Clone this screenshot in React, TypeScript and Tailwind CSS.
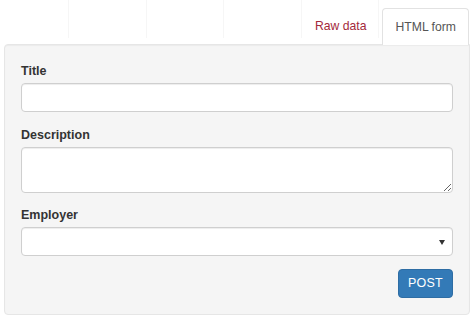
import React from "react";

export default function App() {
  return (
    <div className="w-[474px] h-[320px] bg-white overflow-hidden text-[12px] text-[#333] font-['Liberation_Sans',Arial,sans-serif]">
      {/* top bar with tabs */}
      <div className="relative h-[44px]">
        <div className="absolute inset-x-0 top-0 h-[38px] flex pl-[68px]">
          <div className="w-[78px] border-l border-[#f6f6f6]" />
          <div className="w-[77px] border-l border-[#f6f6f6]" />
          <div className="w-[78px] border-l border-[#f6f6f6]" />
          <div className="w-[77px] border-l border-[#f6f6f6]" />
          <div className="w-[78px] border-l border-[#f6f6f6]" />
        </div>
        <div className="relative flex justify-end items-end h-full pr-[5px]">
          <div className="h-[36px] pl-[12px] pr-[14px] mr-[1px] flex items-center text-[12.2px] text-[#a3293b]">Raw data</div>
          <div className="h-[37px] pl-[13px] pr-[12px] flex items-center bg-white border border-b-0 border-[#e2e2e2] rounded-t-[4px] text-[12.2px] text-[#555] -mb-[1px] relative z-10">
            HTML form
          </div>
        </div>
      </div>
      {/* panel */}
      <div className="mx-[4px] w-[466px] h-[271px] bg-[#f5f5f5] border border-[#e6e6e6] rounded-b-[4px] rounded-tl-[4px] shadow-[inset_0_1px_1px_rgba(0,0,0,0.04)] px-[16px] pt-[18px] pb-[16px] flex flex-col">
        <label className="font-bold leading-[17px] text-[12.5px]">Title</label>
        <input className="mt-[3px] h-[29px] bg-white border border-[#cfcfcf] rounded-[4px] shadow-[inset_0_1px_1px_rgba(0,0,0,0.075)] outline-none px-[10px]" />
        <label className="mt-[15px] font-bold leading-[17px] text-[12.5px]">Description</label>
        <textarea className="mt-[3px] h-[46px] bg-white border border-[#cfcfcf] rounded-[4px] shadow-[inset_0_1px_1px_rgba(0,0,0,0.075)] outline-none px-[10px] resize-y" />
        <label className="mt-[14px] font-bold leading-[17px] text-[12.5px]">Employer</label>
        <div className="relative mt-[3px]">
          <select className="w-full h-[29px] appearance-none bg-white border border-[#cfcfcf] rounded-[4px] shadow-[inset_0_1px_1px_rgba(0,0,0,0.075)] outline-none px-[10px]">
            <option></option>
          </select>
          <svg className="absolute right-[8px] top-[13px]" width="6" height="5" viewBox="0 0 6 5">
            <path d="M0 0 H6 L3 5 Z" fill="#333" />
          </svg>
        </div>
        <div className="mt-[13px] flex justify-end">
          <button className="h-[29px] w-[55px] bg-[#337ab7] border border-[#2e6da4] rounded-[4px] text-white text-[12.5px] tracking-[0.2px]">
            POST
          </button>
        </div>
      </div>
    </div>
  );
}
